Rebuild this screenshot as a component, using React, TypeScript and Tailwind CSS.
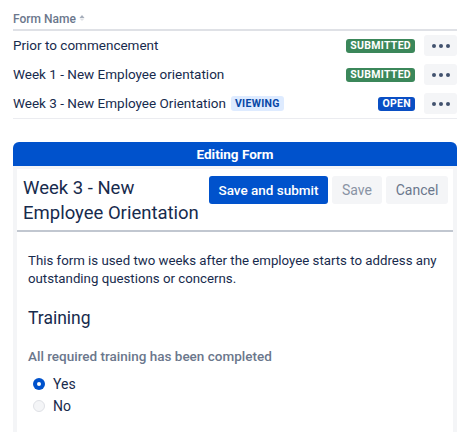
import React from "react";

type Status = "submitted" | "open";

const ROWS: { name: string; status: Status; viewing?: boolean }[] = [
  { name: "Prior to commencement", status: "submitted" },
  { name: "Week 1 - New Employee orientation", status: "submitted" },
  { name: "Week 3 - New Employee Orientation", status: "open", viewing: true },
];

const STATUS_STYLE: Record<Status, string> = {
  submitted: "bg-[#3b875a] text-white",
  open: "bg-[#0a4fc4] text-white",
};

function MoreButton() {
  return (
    <button
      type="button"
      className="flex h-[21px] w-[33px] items-center justify-center gap-[3px] rounded-[3px] bg-[#f4f5f7]"
    >
      <span className="h-[4px] w-[4px] rounded-full bg-[#42526e]" />
      <span className="h-[4px] w-[4px] rounded-full bg-[#42526e]" />
      <span className="h-[4px] w-[4px] rounded-full bg-[#42526e]" />
    </button>
  );
}

function FormRow({ name, status, viewing }: { name: string; status: Status; viewing?: boolean }) {
  return (
    <div className="flex h-[29px] items-center">
      <span className="text-[13.5px] text-[#172b4d]">{name}</span>
      {viewing && (
        <span className="ml-[5px] rounded-[3px] bg-[#deebff] px-[4px] text-[10.5px] font-bold leading-[15px] tracking-[0.3px] text-[#0747a6]">
          VIEWING
        </span>
      )}
      <span
        className={`ml-auto rounded-[3px] px-[4px] text-[10.5px] font-bold uppercase leading-[14px] tracking-[0.3px] ${STATUS_STYLE[status]}`}
      >
        {status}
      </span>
      <span className="ml-[9px]">
        <MoreButton />
      </span>
    </div>
  );
}

function Radio({ checked, label }: { checked?: boolean; label: string }) {
  return (
    <label className="flex h-[22px] items-center gap-[8px] pl-[5px]">
      {checked ? (
        <span className="flex h-[12px] w-[12px] items-center justify-center rounded-full bg-[#0052cc]">
          <span className="h-[4px] w-[4px] rounded-full bg-white" />
        </span>
      ) : (
        <span className="h-[12px] w-[12px] rounded-full border border-[#dfe1e6] bg-[#f4f5f7]" />
      )}
      <span className="text-[14px] leading-[22px] text-[#172b4d]">{label}</span>
    </label>
  );
}

export default function App() {
  return (
    <div className="h-[435px] w-[474px] overflow-hidden bg-white font-['Roboto',sans-serif]">
      <div className="ml-[13px] w-[444px]">
        {/* Forms table */}
        <div className="flex h-[31px] items-end border-b-2 border-[#dfe1e6] pb-[1px]">
          <span className="text-[12px] font-medium leading-[18px] text-[#6b778c]">Form Name</span>
          <svg width="8" height="10" viewBox="0 0 8 10" className="ml-[2px] mb-[5px]">
            <path d="M4 2 L6.5 5 H1.5 Z" fill="#a5adba" />
            <path d="M4 8 L6.5 5.5 H1.5 Z" fill="#dfe1e6" />
          </svg>
        </div>
        <div className="border-b border-[#ebecf0]">
          {ROWS.map((r) => (
            <FormRow key={r.name} {...r} />
          ))}
        </div>

        {/* Editing panel */}
        <div className="mt-[23px]">
          <div className="flex h-[24px] items-center justify-center rounded-t-[6px] bg-[#0052cc] text-[13.5px] font-bold text-white">
            Editing Form
          </div>
          <div className="h-[266px] border-x-4 border-t-[3px] border-[#f4f5f7] bg-white">
            <div className="flex border-b-2 border-[#c1c7d0] pb-[4px] pl-[6px] pr-[5px] pt-[7px]">
              <h1 className="flex-1 text-[18.5px] leading-[25px] text-[#172b4d]">
                Week 3 - New Employee Orientation
              </h1>
              <div className="flex gap-[4px]">
                <button
                  type="button"
                  className="h-[28px] w-[119px] rounded-[3px] bg-[#0052cc] text-[13.5px] font-medium text-white"
                >
                  Save and submit
                </button>
                <button
                  type="button"
                  className="h-[28px] w-[50px] rounded-[3px] bg-[#f4f5f7] text-[14px] text-[#8993a4]"
                >
                  Save
                </button>
                <button
                  type="button"
                  className="h-[28px] w-[62px] rounded-[3px] bg-[#f4f5f7] text-[14px] text-[#6b778c]"
                >
                  Cancel
                </button>
              </div>
            </div>

            <div className="pl-[11px] pr-[10px] pt-[20px]">
              <p className="text-[13.25px] leading-[18px] text-[#172b4d]">
                This form is used two weeks after the employee starts to address any outstanding questions or
                concerns.
              </p>
              <h2 className="mt-[18px] text-[17.5px] leading-[24px] text-[#172b4d]">Training</h2>
              <p className="mt-[17px] text-[13.5px] font-medium leading-[18px] text-[#6b778c]">
                All required training has been completed
              </p>
              <div className="mt-[8px]">
                <Radio checked label="Yes" />
                <Radio label="No" />
              </div>
            </div>
          </div>
        </div>
      </div>
    </div>
  );
}
